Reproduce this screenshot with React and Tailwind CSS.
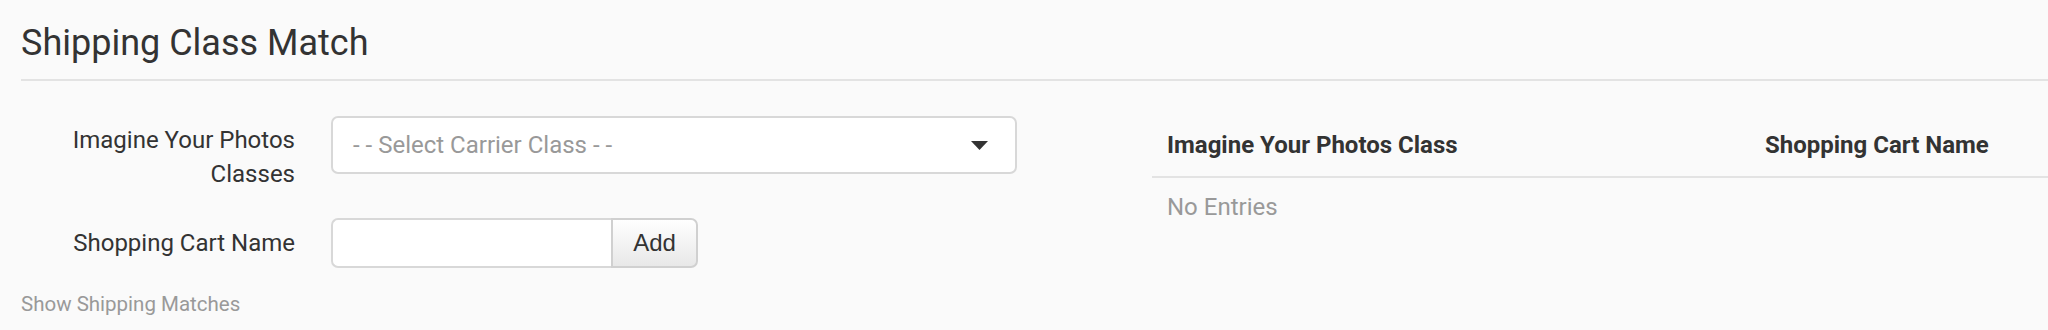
function Caret() {
  return (
    <svg width="17" height="9" viewBox="0 0 17 9" className="shrink-0">
      <path d="M0 0h17L8.5 9z" fill="#333" />
    </svg>
  );
}

function ShippingClassMatch() {
  return (
    <div className="min-h-[330px] w-[2048px] overflow-hidden bg-[#fafafa] pl-[21px] font-['Roboto',sans-serif] text-[#333]">
      <h1 className="pt-[21px] text-[36px] leading-[44px] font-normal">Shipping Class Match</h1>
      <div className="mt-[14px] h-[2px] bg-[#e3e3e3]" />

      <div className="mt-[35px] flex">
        {/* form */}
        <div className="w-[1131px] shrink-0">
          <div className="flex items-start">
            <label className="w-[274px] shrink-0 pt-[7px] text-right text-[24px] leading-[34px]">
              Imagine Your Photos Classes
            </label>
            <div className="ml-[36px] flex h-[58px] w-[686px] items-center justify-between rounded-[7px] border-2 border-[#d8d8d8] bg-white pr-[27px] pl-[20px]">
              <span className="text-[24px] text-[#999]">- - Select Carrier Class - -</span>
              <Caret />
            </div>
          </div>

          <div className="mt-[27px] flex items-center">
            <label className="w-[274px] shrink-0 text-right text-[24px] leading-[34px]">Shopping Cart Name</label>
            <div className="ml-[36px] flex h-[50px]">
              <div className="w-[280px] rounded-l-[7px] border-2 border-r-0 border-[#d8d8d8] bg-white" />
              <button className="w-[87px] rounded-r-[7px] border-2 border-[#d0d0d0] bg-gradient-to-b from-white to-[#e8e8e8] font-['Liberation_Sans',Arial,sans-serif] text-[24px] text-[#333]">
                Add
              </button>
            </div>
          </div>

          <div className="mt-[22px] text-[20.5px] leading-[28px] text-[#999]">Show Shipping Matches</div>
        </div>

        {/* table */}
        <div className="flex-1">
          <div className="flex border-b-2 border-[#e3e3e3] pt-[12px] pb-[14px] text-[24px] leading-[34px] font-bold">
            <div className="w-[598px] shrink-0 pl-[15px]">Imagine Your Photos Class</div>
            <div className="pl-[15px]">Shopping Cart Name</div>
          </div>
          <div className="pt-[12px] pl-[15px] text-[24px] leading-[34px] text-[#999]">No Entries</div>
        </div>
      </div>
    </div>
  );
}

export default function App() {
  return <ShippingClassMatch />;
}
